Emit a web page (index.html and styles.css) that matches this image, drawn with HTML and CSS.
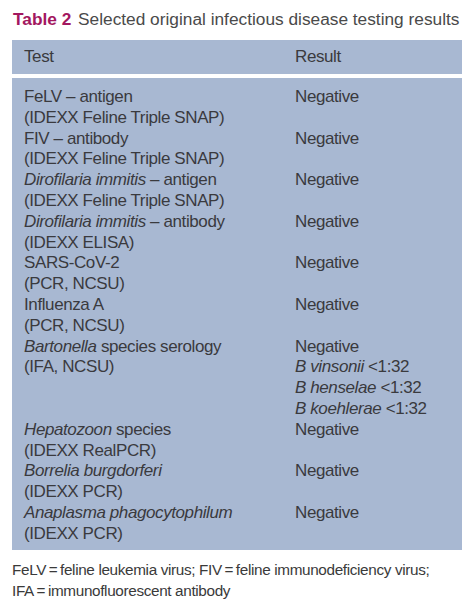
FILE: index.html
```html
<!DOCTYPE html>
<html>
<head>
<meta charset="utf-8">
<link rel="stylesheet" href="styles.css">
</head>
<body>
<div class="page">
  <h1 class="title"><span class="label">Table 2</span> Selected original infectious disease testing results</h1>
  <div class="table">
    <div class="head">
      <div class="c1">Test</div>
      <div class="c2">Result</div>
    </div>
    <div class="body">
      <div class="c1">FeLV – antigen<br>(IDEXX Feline Triple SNAP)</div>
      <div class="c2">Negative</div>
      <div class="c1">FIV – antibody<br>(IDEXX Feline Triple SNAP)</div>
      <div class="c2">Negative</div>
      <div class="c1"><i>Dirofilaria immitis</i> – antigen<br>(IDEXX Feline Triple SNAP)</div>
      <div class="c2">Negative</div>
      <div class="c1"><i>Dirofilaria immitis</i> – antibody<br>(IDEXX ELISA)</div>
      <div class="c2">Negative</div>
      <div class="c1">SARS-CoV-2<br>(PCR, NCSU)</div>
      <div class="c2">Negative</div>
      <div class="c1">Influenza A<br>(PCR, NCSU)</div>
      <div class="c2">Negative</div>
      <div class="c1"><i>Bartonella</i> species serology<br>(IFA, NCSU)</div>
      <div class="c2">Negative<br><i>B vinsonii</i> &lt;1:32<br><i>B henselae</i> &lt;1:32<br><i>B koehlerae</i> &lt;1:32</div>
      <div class="c1"><i>Hepatozoon</i> species<br>(IDEXX RealPCR)</div>
      <div class="c2">Negative</div>
      <div class="c1"><i>Borrelia burgdorferi</i><br>(IDEXX PCR)</div>
      <div class="c2">Negative</div>
      <div class="c1"><i>Anaplasma phagocytophilum</i><br>(IDEXX PCR)</div>
      <div class="c2">Negative</div>
    </div>
  </div>
  <p class="note">FeLV&thinsp;=&thinsp;feline leukemia virus; FIV&thinsp;=&thinsp;feline immunodeficiency virus;<br>IFA&thinsp;=&thinsp;immunofluorescent antibody</p>
</div>
</body>
</html>
```
FILE: styles.css
```css
html, body {
  margin: 0;
  padding: 0;
  background: #ffffff;
}
.page {
  width: 474px;
  padding: 9px 12px 0 12px;
  box-sizing: border-box;
  font-family: "Liberation Sans", Arial, sans-serif;
  color: #3a3a3e;
}
.title {
  margin: 0 0 0 1px;
  font-size: 17.3px;
  font-weight: normal;
  line-height: 20px;
  color: #4a4a4a;
  white-space: nowrap;
}
.label {
  font-weight: bold;
  color: #a3175f;
  margin-right: 2px;
}
.table {
  margin-top: 11px;
  width: 450px;
  font-size: 17px;
  letter-spacing: -0.4px;
}
.head, .body {
  display: grid;
  grid-template-columns: 271px 1fr;
  background: #a8b8d2;
  padding-left: 12px;
}
.head {
  height: 34px;
  align-items: center;
  line-height: 20px;
}
.body {
  margin-top: 4px;
  padding-top: 9px;
  padding-bottom: 5px;
  line-height: 20.8px;
}
.note {
  margin: 9px 0 0 0;
  font-size: 15.3px;
  line-height: 21px;
  letter-spacing: -0.35px;
  color: #3a3a3a;
  white-space: nowrap;
}
```
